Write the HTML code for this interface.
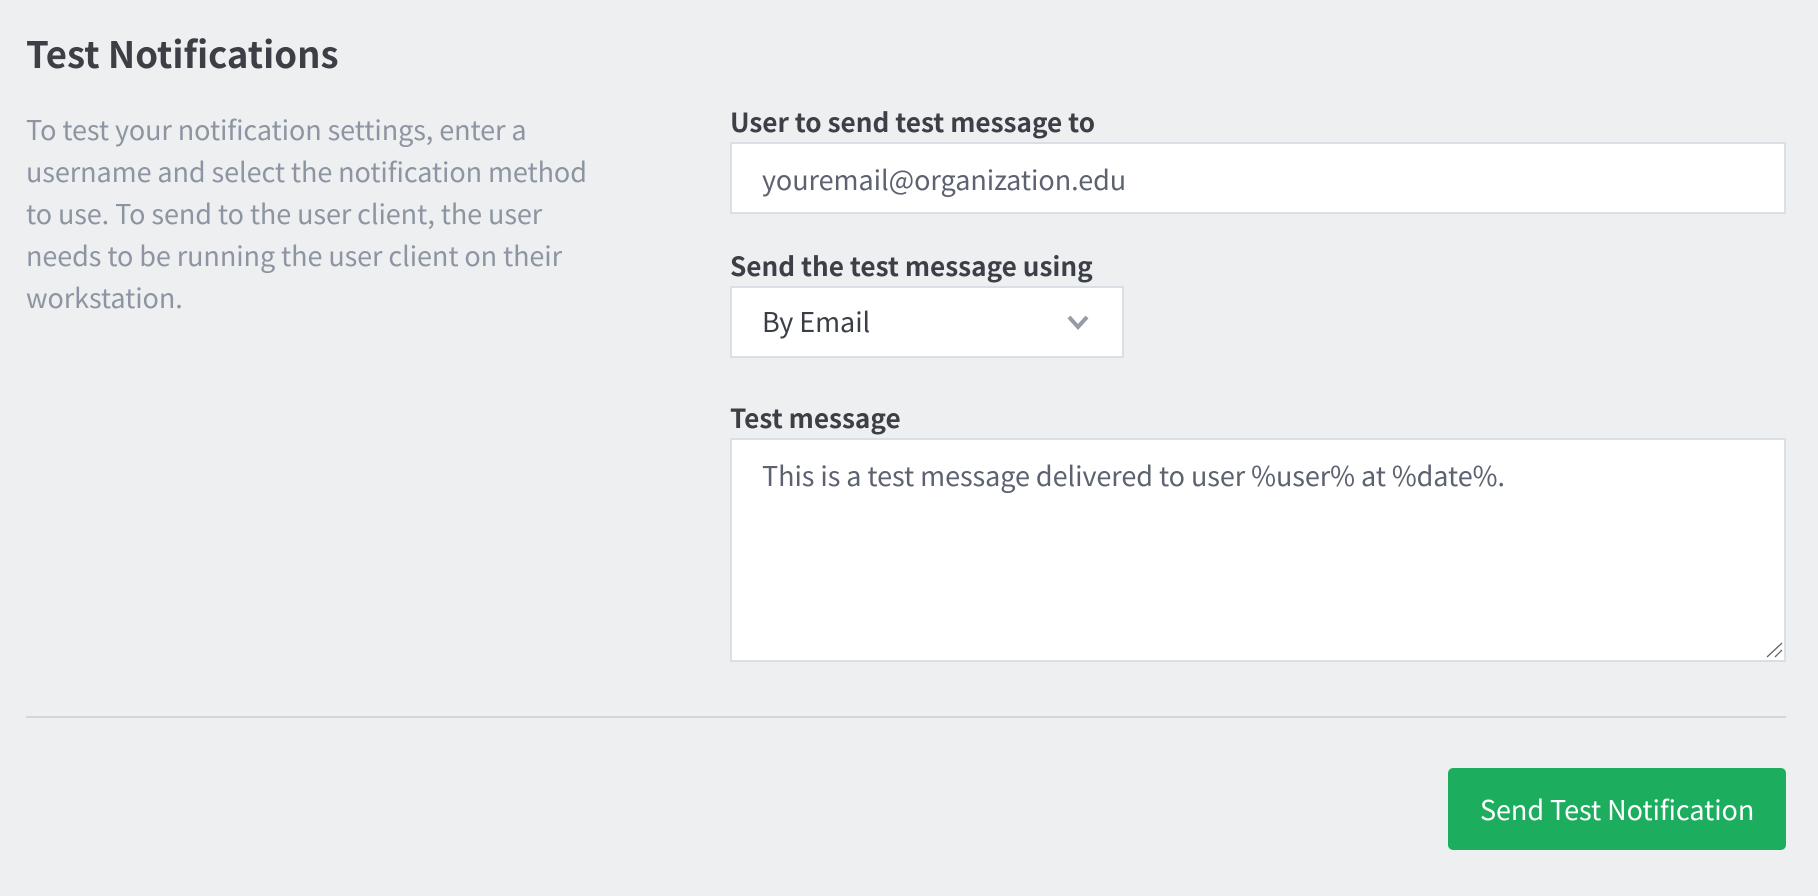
<!DOCTYPE html>
<html lang="en">
<head>
<meta charset="utf-8">
<title>Test Notifications</title>
<style>
html,body{margin:0;padding:0;width:1818px;height:896px;overflow:hidden;background:#eeeff1;}
body{position:relative;font-family:"Noto Sans CJK JP","Liberation Sans",sans-serif;}
.t{position:absolute;white-space:nowrap;line-height:40px;}
.box{position:absolute;box-sizing:border-box;background:#fff;border:2px solid #d8dfe6;}
.title{left:26px;top:33px;font-size:36.5px;font-weight:700;color:#3c4046;}
.p{left:26px;font-size:27px;letter-spacing:-.08px;color:#8c95a1;}
.l{left:730px;font-size:26.15px;font-weight:700;color:#3c4046;}
.v{font-size:27px;letter-spacing:-.06px;color:#5c6270;}
</style>
</head>
<body>
<div class="t title">Test Notifications</div>
<div class="t p" style="top:109px">To test your notification settings, enter a</div>
<div class="t p" style="top:151px">username and select the notification method</div>
<div class="t p" style="top:193px">to use. To send to the user client, the user</div>
<div class="t p" style="top:235px">needs to be running the user client on their</div>
<div class="t p" style="top:277px">workstation.</div>

<div class="t l" style="top:101px">User to send test message to</div>
<div class="box" style="left:730px;top:142px;width:1056px;height:72px"></div>
<div class="t v" style="left:762px;top:159px">youremail@organization.edu</div>

<div class="t l" style="top:245px">Send the test message using</div>
<div class="box" style="left:730px;top:286px;width:394px;height:72px"></div>
<div class="t v" style="left:762px;top:301px;color:#3a3f47">By Email</div>
<svg style="position:absolute;left:1066px;top:314px" width="24" height="18" viewBox="0 0 24 18"><path d="M3 3 L12 13 L21 3" fill="none" stroke="#959ca8" stroke-width="4"/></svg>

<div class="t l" style="top:397px">Test message</div>
<div class="box" style="left:730px;top:438px;width:1056px;height:224px"></div>
<div class="t v" style="left:762px;top:455px">This is a test message delivered to user %user% at %date%.</div>
<svg style="position:absolute;left:1764px;top:640px" width="20" height="20" viewBox="0 0 20 20"><path d="M3 17 L18 3 M11 17 L18 10" fill="none" stroke="#666" stroke-width="1.3"/></svg>

<div style="position:absolute;left:26px;top:716px;width:1760px;height:2px;background:#d2d5da"></div>

<div style="position:absolute;left:1448px;top:768px;width:338px;height:82px;background:#1cae5e;border-radius:5px"></div>
<div class="t" style="left:1480px;top:789px;font-size:27px;letter-spacing:-.06px;color:#fff">Send Test Notification</div>
</body>
</html>
